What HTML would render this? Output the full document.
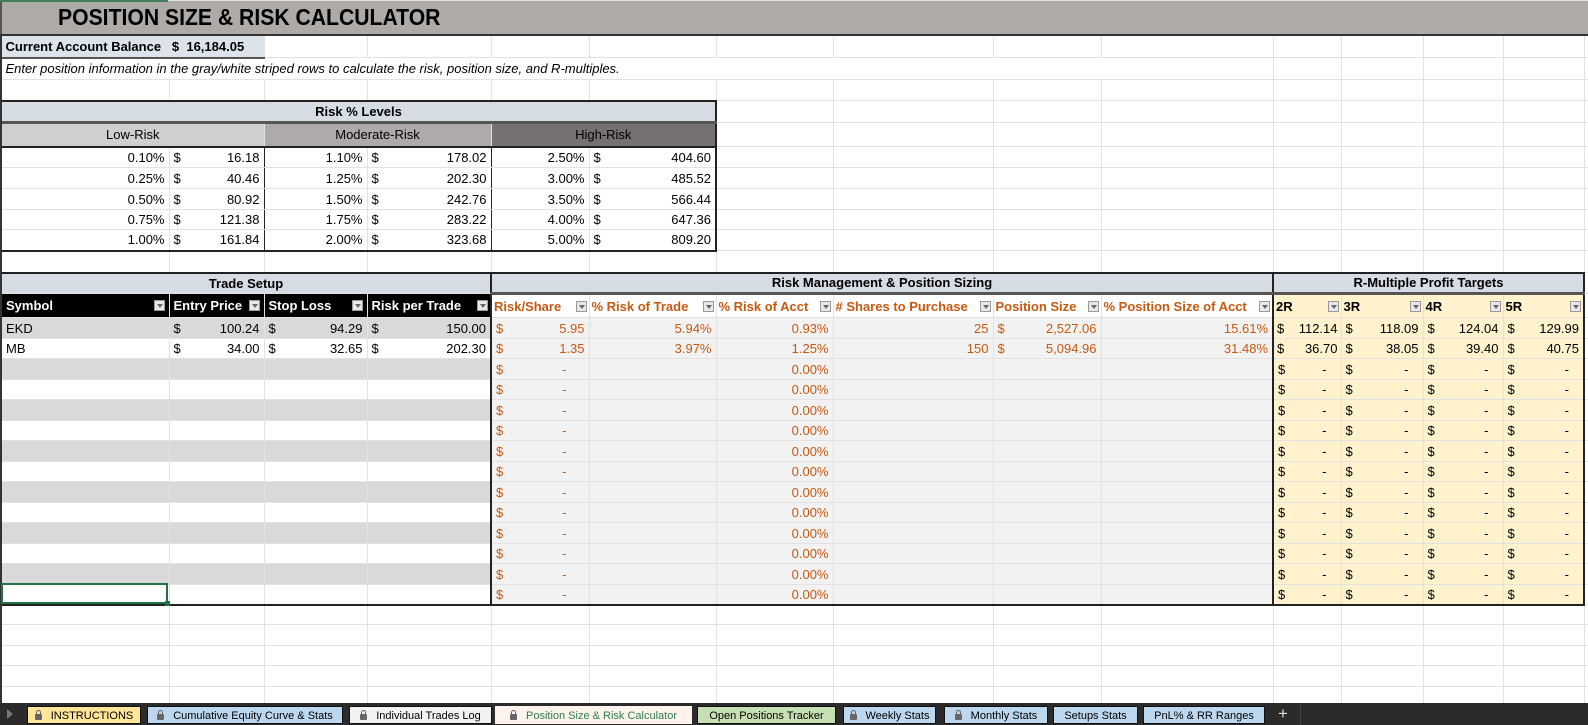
<!DOCTYPE html>
<html><head><meta charset="utf-8">
<style>
*{margin:0;padding:0;box-sizing:border-box}
body{width:1588px;height:725px;overflow:hidden;background:#fff;font-family:"Liberation Sans",Arial,sans-serif;font-size:13px;color:#000;position:relative}
table{border-collapse:collapse;table-layout:fixed;position:absolute;left:0;top:0;width:1588px}
td{border:1px solid #e2e2e2;padding:0 4px;white-space:nowrap;overflow:hidden;vertical-align:middle;line-height:1}
.r{text-align:right}.c{text-align:center}.b{font-weight:bold}
.m span{float:left}.m{text-align:right}
.o{color:#c65911}
.hb{background:#d6dce4;font-weight:bold;text-align:center}
.blk{background:#000;color:#fff;font-weight:bold}
.oh{color:#c65911;font-weight:bold;background:#fff}
.yh{background:#fff2cc;font-weight:bold}
.g{background:#d9d9d9}
.lg{background:#f2f2f2}
.y{background:#fff2cc}
.dd{display:inline-block;width:11px;height:11px;background:#e8e8e8;border:1px solid #999;float:right;margin-top:1px;position:relative}
.dd:after{content:"";position:absolute;left:2px;top:3px;border-left:3px solid transparent;border-right:3px solid transparent;border-top:4px solid #666}
.tabs{position:absolute;left:0;top:703px;width:1588px;height:22px;background:#2b2b2b}
.tab{position:absolute;top:3px;height:18px;font-size:11px;line-height:18px;text-align:center;color:#000;border:1px solid #111}
.lock{display:inline-block;width:7px;height:6px;background:#666;border-radius:1px;margin-right:9px;position:relative;vertical-align:-1px}
.lock:before{content:"";position:absolute;left:1px;top:-4px;width:3px;height:4px;border:1px solid #666;border-bottom:none;border-radius:3px 3px 0 0}
</style></head><body>
<div style="position:absolute;left:0;top:0;width:168px;height:2px;background:#3f7f5a;z-index:2"></div>
<table>
<colgroup><col style="width:168px"><col style="width:95px"><col style="width:103px"><col style="width:124px"><col style="width:98px"><col style="width:127px"><col style="width:117px"><col style="width:160px"><col style="width:108px"><col style="width:172px"><col style="width:68px"><col style="width:82px"><col style="width:80px"><col style="width:81px"><col style="width:5px"></colgroup>
<tr style="height:34px"><td colspan="15" style="background:#aeaaa7;border-bottom:2px solid #333;border-left:2px solid #555;font-weight:bold;font-size:23px;padding-left:56px"><span style="display:inline-block;transform:scaleX(0.92);transform-origin:left center">POSITION SIZE &amp; RISK CALCULATOR</span></td></tr>
<tr style="height:23px"><td colspan="2" style="background:#dde3ea;font-weight:bold;border-bottom:2px solid #555;font-size:13px">Current Account Balance&nbsp;&nbsp;&nbsp;$&nbsp;&nbsp;16,184.05</td><td></td><td></td><td></td><td></td><td></td><td></td><td></td><td></td><td></td><td></td><td></td><td></td><td></td></tr>
<tr style="height:22px"><td colspan="10" style="font-style:italic;border-color:transparent #e2e2e2 #e2e2e2 transparent">Enter position information in the gray/white striped rows to calculate the risk, position size, and R-multiples.</td><td></td><td></td><td></td><td></td><td></td></tr>
<tr style="height:21px"><td></td><td></td><td></td><td></td><td></td><td></td><td></td><td></td><td></td><td></td><td></td><td></td><td></td><td></td><td></td></tr>
<tr style="height:22px"><td colspan="6" class="hb" style="border:2px solid #222;border-bottom:3px solid #555">Risk % Levels</td><td></td><td></td><td></td><td></td><td></td><td></td><td></td><td></td><td></td></tr>
<tr style="height:24px"><td colspan="2" class="c" style="background:#d0cece;border-left:2px solid #222;border-bottom:2px solid #222">Low-Risk</td><td colspan="2" class="c" style="background:#aeaaaa;border-bottom:2px solid #222">Moderate-Risk</td><td colspan="2" class="c" style="background:#767171;border-right:2px solid #222;border-bottom:2px solid #222">High-Risk</td><td></td><td></td><td></td><td></td><td></td><td></td><td></td><td></td><td></td></tr>
<tr style="height:21px"><td class="r" style="border-left:2px solid #222">0.10%</td><td class="m" style="border-right:1px solid #222"><span>$</span>16.18</td><td class="r">1.10%</td><td class="m" style="border-right:1px solid #222"><span>$</span>178.02</td><td class="r">2.50%</td><td class="m" style="border-right:2px solid #222"><span>$</span>404.60</td><td></td><td></td><td></td><td></td><td></td><td></td><td></td><td></td><td></td></tr>
<tr style="height:21px"><td class="r" style="border-left:2px solid #222">0.25%</td><td class="m" style="border-right:1px solid #222"><span>$</span>40.46</td><td class="r">1.25%</td><td class="m" style="border-right:1px solid #222"><span>$</span>202.30</td><td class="r">3.00%</td><td class="m" style="border-right:2px solid #222"><span>$</span>485.52</td><td></td><td></td><td></td><td></td><td></td><td></td><td></td><td></td><td></td></tr>
<tr style="height:21px"><td class="r" style="border-left:2px solid #222">0.50%</td><td class="m" style="border-right:1px solid #222"><span>$</span>80.92</td><td class="r">1.50%</td><td class="m" style="border-right:1px solid #222"><span>$</span>242.76</td><td class="r">3.50%</td><td class="m" style="border-right:2px solid #222"><span>$</span>566.44</td><td></td><td></td><td></td><td></td><td></td><td></td><td></td><td></td><td></td></tr>
<tr style="height:20px"><td class="r" style="border-left:2px solid #222">0.75%</td><td class="m" style="border-right:1px solid #222"><span>$</span>121.38</td><td class="r">1.75%</td><td class="m" style="border-right:1px solid #222"><span>$</span>283.22</td><td class="r">4.00%</td><td class="m" style="border-right:2px solid #222"><span>$</span>647.36</td><td></td><td></td><td></td><td></td><td></td><td></td><td></td><td></td><td></td></tr>
<tr style="height:21px"><td class="r" style="border-left:2px solid #222;border-bottom:2px solid #222">1.00%</td><td class="m" style="border-right:1px solid #222;border-bottom:2px solid #222"><span>$</span>161.84</td><td class="r" style="border-bottom:2px solid #222">2.00%</td><td class="m" style="border-right:1px solid #222;border-bottom:2px solid #222"><span>$</span>323.68</td><td class="r" style="border-bottom:2px solid #222">5.00%</td><td class="m" style="border-right:2px solid #222;border-bottom:2px solid #222"><span>$</span>809.20</td><td></td><td></td><td></td><td></td><td></td><td></td><td></td><td></td><td></td></tr>
<tr style="height:22px"><td></td><td></td><td></td><td></td><td></td><td></td><td></td><td></td><td></td><td></td><td></td><td></td><td></td><td></td><td></td></tr>
<tr style="height:21px"><td colspan="4" class="hb" style="border:2px solid #222;border-bottom:none">Trade Setup</td><td colspan="6" class="hb" style="border:2px solid #222;border-bottom:3px solid #555">Risk Management &amp; Position Sizing</td><td colspan="4" class="hb" style="border:2px solid #222;border-bottom:3px solid #555">R-Multiple Profit Targets</td><td></td></tr>
<tr style="height:24px">
<td class="blk" style="border-left:2px solid #222">Symbol<i class="dd"></i></td><td class="blk">Entry Price<i class="dd"></i></td><td class="blk">Stop Loss<i class="dd"></i></td><td class="blk" style="padding-right:2px">Risk per Trade<i class="dd"></i></td>
<td class="oh" style="border-left:2px solid #222;padding:0 2px">Risk/Share<i class="dd"></i></td><td class="oh" style="padding:0 2px">% Risk of Trade<i class="dd"></i></td><td class="oh" style="padding:0 2px">% Risk of Acct<i class="dd"></i></td><td class="oh" style="padding:0 2px"># Shares to Purchase<i class="dd"></i></td><td class="oh" style="padding:0 2px">Position Size<i class="dd"></i></td><td class="oh" style="padding:0 2px">% Position Size of Acct<i class="dd"></i></td>
<td class="yh" style="border-left:2px solid #222;padding:0 2px">2R<i class="dd"></i></td><td class="yh" style="padding:0 2px">3R<i class="dd"></i></td><td class="yh" style="padding:0 2px">4R<i class="dd"></i></td><td class="yh" style="border-right:2px solid #222;padding:0 2px">5R<i class="dd"></i></td><td></td></tr>
<tr style="height:21px"><td class="g" style="border-left:2px solid #222">EKD</td><td class="g m"><span>$</span>100.24</td><td class="g m"><span>$</span>94.29</td><td class="g m"><span>$</span>150.00</td>
<td class="lg m o" style="border-left:2px solid #222"><span>$</span>5.95</td><td class="lg r o">5.94%</td><td class="lg r o">0.93%</td><td class="lg r o">25</td><td class="lg m o"><span>$</span>2,527.06</td><td class="lg r o">15.61%</td>
<td class="y m" style="border-left:2px solid #222;padding:0 3px"><span>$</span>112.14</td><td class="y m"><span>$</span>118.09</td><td class="y m"><span>$</span>124.04</td><td class="y m" style="border-right:2px solid #222"><span>$</span>129.99</td><td></td></tr>
<tr style="height:20px"><td style="border-left:2px solid #222">MB</td><td class="m"><span>$</span>34.00</td><td class="m"><span>$</span>32.65</td><td class="m"><span>$</span>202.30</td>
<td class="lg m o" style="border-left:2px solid #222"><span>$</span>1.35</td><td class="lg r o">3.97%</td><td class="lg r o">1.25%</td><td class="lg r o">150</td><td class="lg m o"><span>$</span>5,094.96</td><td class="lg r o">31.48%</td>
<td class="y m" style="border-left:2px solid #222;padding:0 3px"><span>$</span>36.70</td><td class="y m"><span>$</span>38.05</td><td class="y m"><span>$</span>39.40</td><td class="y m" style="border-right:2px solid #222"><span>$</span>40.75</td><td></td></tr>
<tr style="height:21px"><td class="g" style="border-left:2px solid #222"></td><td class="g"></td><td class="g"></td><td class="g"></td><td class="lg m o" style="border-left:2px solid #222;padding-right:22px"><span>$</span>-</td><td class="lg"></td><td class="lg r o">0.00%</td><td class="lg"></td><td class="lg"></td><td class="lg"></td><td class="y m" style="border-left:2px solid #222;padding-right:14px"><span>$</span>-</td><td class="y m" style="padding-right:14px"><span>$</span>-</td><td class="y m" style="padding-right:14px"><span>$</span>-</td><td class="y m" style="border-right:2px solid #222;padding-right:14px"><span>$</span>-</td><td></td></tr>
<tr style="height:20px"><td style="border-left:2px solid #222"></td><td></td><td></td><td></td><td class="lg m o" style="border-left:2px solid #222;padding-right:22px"><span>$</span>-</td><td class="lg"></td><td class="lg r o">0.00%</td><td class="lg"></td><td class="lg"></td><td class="lg"></td><td class="y m" style="border-left:2px solid #222;padding-right:14px"><span>$</span>-</td><td class="y m" style="padding-right:14px"><span>$</span>-</td><td class="y m" style="padding-right:14px"><span>$</span>-</td><td class="y m" style="border-right:2px solid #222;padding-right:14px"><span>$</span>-</td><td></td></tr>
<tr style="height:21px"><td class="g" style="border-left:2px solid #222"></td><td class="g"></td><td class="g"></td><td class="g"></td><td class="lg m o" style="border-left:2px solid #222;padding-right:22px"><span>$</span>-</td><td class="lg"></td><td class="lg r o">0.00%</td><td class="lg"></td><td class="lg"></td><td class="lg"></td><td class="y m" style="border-left:2px solid #222;padding-right:14px"><span>$</span>-</td><td class="y m" style="padding-right:14px"><span>$</span>-</td><td class="y m" style="padding-right:14px"><span>$</span>-</td><td class="y m" style="border-right:2px solid #222;padding-right:14px"><span>$</span>-</td><td></td></tr>
<tr style="height:20px"><td style="border-left:2px solid #222"></td><td></td><td></td><td></td><td class="lg m o" style="border-left:2px solid #222;padding-right:22px"><span>$</span>-</td><td class="lg"></td><td class="lg r o">0.00%</td><td class="lg"></td><td class="lg"></td><td class="lg"></td><td class="y m" style="border-left:2px solid #222;padding-right:14px"><span>$</span>-</td><td class="y m" style="padding-right:14px"><span>$</span>-</td><td class="y m" style="padding-right:14px"><span>$</span>-</td><td class="y m" style="border-right:2px solid #222;padding-right:14px"><span>$</span>-</td><td></td></tr>
<tr style="height:21px"><td class="g" style="border-left:2px solid #222"></td><td class="g"></td><td class="g"></td><td class="g"></td><td class="lg m o" style="border-left:2px solid #222;padding-right:22px"><span>$</span>-</td><td class="lg"></td><td class="lg r o">0.00%</td><td class="lg"></td><td class="lg"></td><td class="lg"></td><td class="y m" style="border-left:2px solid #222;padding-right:14px"><span>$</span>-</td><td class="y m" style="padding-right:14px"><span>$</span>-</td><td class="y m" style="padding-right:14px"><span>$</span>-</td><td class="y m" style="border-right:2px solid #222;padding-right:14px"><span>$</span>-</td><td></td></tr>
<tr style="height:20px"><td style="border-left:2px solid #222"></td><td></td><td></td><td></td><td class="lg m o" style="border-left:2px solid #222;padding-right:22px"><span>$</span>-</td><td class="lg"></td><td class="lg r o">0.00%</td><td class="lg"></td><td class="lg"></td><td class="lg"></td><td class="y m" style="border-left:2px solid #222;padding-right:14px"><span>$</span>-</td><td class="y m" style="padding-right:14px"><span>$</span>-</td><td class="y m" style="padding-right:14px"><span>$</span>-</td><td class="y m" style="border-right:2px solid #222;padding-right:14px"><span>$</span>-</td><td></td></tr>
<tr style="height:21px"><td class="g" style="border-left:2px solid #222"></td><td class="g"></td><td class="g"></td><td class="g"></td><td class="lg m o" style="border-left:2px solid #222;padding-right:22px"><span>$</span>-</td><td class="lg"></td><td class="lg r o">0.00%</td><td class="lg"></td><td class="lg"></td><td class="lg"></td><td class="y m" style="border-left:2px solid #222;padding-right:14px"><span>$</span>-</td><td class="y m" style="padding-right:14px"><span>$</span>-</td><td class="y m" style="padding-right:14px"><span>$</span>-</td><td class="y m" style="border-right:2px solid #222;padding-right:14px"><span>$</span>-</td><td></td></tr>
<tr style="height:20px"><td style="border-left:2px solid #222"></td><td></td><td></td><td></td><td class="lg m o" style="border-left:2px solid #222;padding-right:22px"><span>$</span>-</td><td class="lg"></td><td class="lg r o">0.00%</td><td class="lg"></td><td class="lg"></td><td class="lg"></td><td class="y m" style="border-left:2px solid #222;padding-right:14px"><span>$</span>-</td><td class="y m" style="padding-right:14px"><span>$</span>-</td><td class="y m" style="padding-right:14px"><span>$</span>-</td><td class="y m" style="border-right:2px solid #222;padding-right:14px"><span>$</span>-</td><td></td></tr>
<tr style="height:21px"><td class="g" style="border-left:2px solid #222"></td><td class="g"></td><td class="g"></td><td class="g"></td><td class="lg m o" style="border-left:2px solid #222;padding-right:22px"><span>$</span>-</td><td class="lg"></td><td class="lg r o">0.00%</td><td class="lg"></td><td class="lg"></td><td class="lg"></td><td class="y m" style="border-left:2px solid #222;padding-right:14px"><span>$</span>-</td><td class="y m" style="padding-right:14px"><span>$</span>-</td><td class="y m" style="padding-right:14px"><span>$</span>-</td><td class="y m" style="border-right:2px solid #222;padding-right:14px"><span>$</span>-</td><td></td></tr>
<tr style="height:20px"><td style="border-left:2px solid #222"></td><td></td><td></td><td></td><td class="lg m o" style="border-left:2px solid #222;padding-right:22px"><span>$</span>-</td><td class="lg"></td><td class="lg r o">0.00%</td><td class="lg"></td><td class="lg"></td><td class="lg"></td><td class="y m" style="border-left:2px solid #222;padding-right:14px"><span>$</span>-</td><td class="y m" style="padding-right:14px"><span>$</span>-</td><td class="y m" style="padding-right:14px"><span>$</span>-</td><td class="y m" style="border-right:2px solid #222;padding-right:14px"><span>$</span>-</td><td></td></tr>
<tr style="height:21px"><td class="g" style="border-left:2px solid #222"></td><td class="g"></td><td class="g"></td><td class="g"></td><td class="lg m o" style="border-left:2px solid #222;padding-right:22px"><span>$</span>-</td><td class="lg"></td><td class="lg r o">0.00%</td><td class="lg"></td><td class="lg"></td><td class="lg"></td><td class="y m" style="border-left:2px solid #222;padding-right:14px"><span>$</span>-</td><td class="y m" style="padding-right:14px"><span>$</span>-</td><td class="y m" style="padding-right:14px"><span>$</span>-</td><td class="y m" style="border-right:2px solid #222;padding-right:14px"><span>$</span>-</td><td></td></tr>
<tr style="height:20px"><td style="border-left:2px solid #222;border-bottom:2px solid #222"></td><td style="border-bottom:2px solid #222"></td><td style="border-bottom:2px solid #222"></td><td style="border-bottom:2px solid #222"></td><td class="lg m o" style="border-left:2px solid #222;padding-right:22px;border-bottom:2px solid #222"><span>$</span>-</td><td class="lg" style="border-bottom:2px solid #222"></td><td class="lg r o" style="border-bottom:2px solid #222">0.00%</td><td class="lg" style="border-bottom:2px solid #222"></td><td class="lg" style="border-bottom:2px solid #222"></td><td class="lg" style="border-bottom:2px solid #222"></td><td class="y m" style="border-left:2px solid #222;padding-right:14px;border-bottom:2px solid #222"><span>$</span>-</td><td class="y m" style="padding-right:14px;border-bottom:2px solid #222"><span>$</span>-</td><td class="y m" style="padding-right:14px;border-bottom:2px solid #222"><span>$</span>-</td><td class="y m" style="border-right:2px solid #222;padding-right:14px;border-bottom:2px solid #222"><span>$</span>-</td><td></td></tr>
<tr style="height:20px"><td></td><td></td><td></td><td></td><td></td><td></td><td></td><td></td><td></td><td></td><td></td><td></td><td></td><td></td><td></td></tr>
<tr style="height:21px"><td></td><td></td><td></td><td></td><td></td><td></td><td></td><td></td><td></td><td></td><td></td><td></td><td></td><td></td><td></td></tr>
<tr style="height:20px"><td></td><td></td><td></td><td></td><td></td><td></td><td></td><td></td><td></td><td></td><td></td><td></td><td></td><td></td><td></td></tr>
<tr style="height:21px"><td></td><td></td><td></td><td></td><td></td><td></td><td></td><td></td><td></td><td></td><td></td><td></td><td></td><td></td><td></td></tr>
<tr style="height:20px"><td></td><td></td><td></td><td></td><td></td><td></td><td></td><td></td><td></td><td></td><td></td><td></td><td></td><td></td><td></td></tr>
</table>
<div style="position:absolute;left:0;top:34px;width:2px;height:670px;background:#333"></div>
<div style="position:absolute;left:1px;top:583px;width:167px;height:21px;border:2px solid #217346"></div>
<div style="position:absolute;left:165px;top:601px;width:5px;height:5px;background:#217346"></div>
<div class="tabs">
<div style="position:absolute;left:7px;top:6px;border-left:6px solid #777;border-top:5px solid transparent;border-bottom:5px solid transparent"></div>
<div class="tab" style="left:27px;width:114px;background:#ffe699"><i class="lock"></i>INSTRUCTIONS</div>
<div class="tab" style="left:147px;width:196px;background:#bdd7ee"><i class="lock"></i>Cumulative Equity Curve &amp; Stats</div>
<div class="tab" style="left:349px;width:143px;background:#f2f2f2"><i class="lock"></i>Individual Trades Log</div>
<div class="tab" style="left:495px;width:197px;background:#fdf2ec;color:#2e7d4f;border-color:#fdf2ec"><i class="lock"></i>Position Size &amp; Risk Calculator</div>
<div class="tab" style="left:697px;width:139px;background:#c6e0b4">Open Positions Tracker</div>
<div class="tab" style="left:843px;width:93px;background:#bdd7ee"><i class="lock"></i>Weekly Stats</div>
<div class="tab" style="left:944px;width:104px;background:#bdd7ee"><i class="lock"></i>Monthly Stats</div>
<div class="tab" style="left:1053px;width:85px;background:#bdd7ee">Setups Stats</div>
<div class="tab" style="left:1143px;width:122px;background:#bdd7ee">PnL% &amp; RR Ranges</div>
<div style="position:absolute;left:1278px;top:1px;color:#ddd;font-size:17px">+</div>
<div style="position:absolute;left:1300px;top:0;width:1px;height:22px;background:#444"></div>
</div>
</body></html>
